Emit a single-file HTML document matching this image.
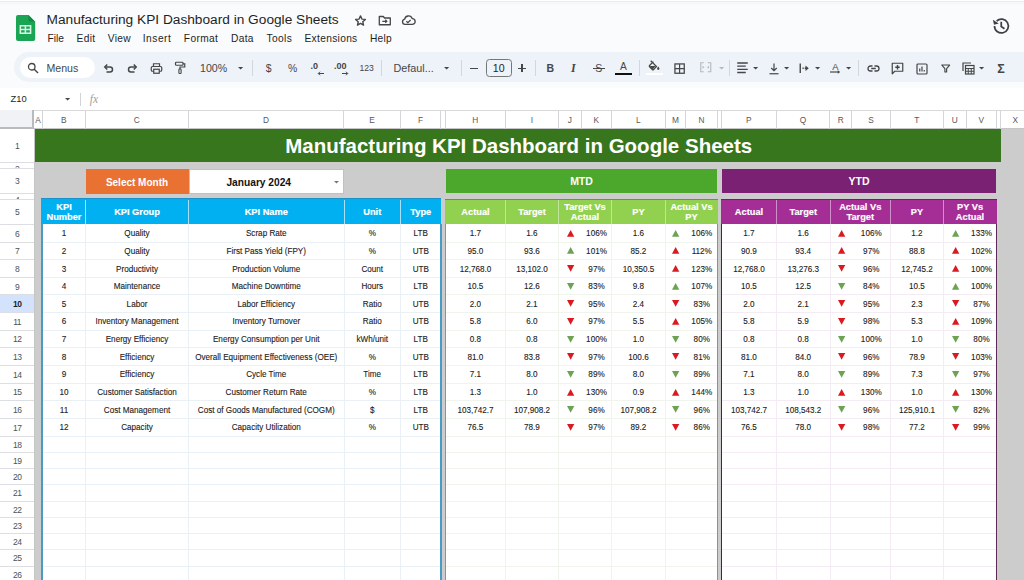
<!DOCTYPE html>
<html lang="en"><head><meta charset="utf-8"><title>Manufacturing KPI Dashboard in Google Sheets</title>
<style>
html,body{margin:0;padding:0;}
body{width:1024px;height:580px;overflow:hidden;background:#fff;position:relative;font-family:"Liberation Sans",Arial,sans-serif;color:#1f1f1f;}
div{position:absolute;box-sizing:border-box;white-space:nowrap;}
.c{display:flex;align-items:center;justify-content:center;text-align:center;}
.t{line-height:1;}
svg{position:absolute;overflow:visible;}
.rh{font-size:8.5px;color:#4d5156;letter-spacing:-0.45px;padding-left:0.8px;}
.ch{font-size:8.3px;color:#55585c;padding-left:0.6px;}
.d{font-size:8.14px;color:#1a1a1a;padding-top:1.1px;-webkit-text-stroke:0.1px #1a1a1a;}
.hd{font-size:9.25px;font-weight:700;color:#fff;line-height:1.1;white-space:normal;padding-top:1.0px;-webkit-text-stroke:0.18px #fff;}
.mn{font-size:10.2px;color:#1f1f1f;}
.tb{font-size:10.2px;color:#444746;}
</style></head>
<body>
<div class="" style="left:0.00px;top:0.00px;width:1024.00px;height:110.00px;background:#f9fbfd;"></div>
<div class="" style="left:0.00px;top:0.00px;width:1024.00px;height:1.20px;background:#fff;"></div>
<div class="" style="left:0.00px;top:1.20px;width:1024.00px;height:1.30px;background:#e8eae5;"></div>
<div class="" style="left:0.00px;top:2.50px;width:1024.00px;height:1.10px;background:#f3f5f4;"></div>
<div class="" style="left:14.00px;top:52.40px;width:1026.00px;height:29.80px;background:#eef2f9;border-radius:15px;"></div>
<div class="" style="left:19.50px;top:56.50px;width:75.50px;height:21.50px;background:#fff;border-radius:11px;"></div>
<div class="" style="left:0.00px;top:87.50px;width:1024.00px;height:22.50px;background:#fff;"></div>
<div class="t" style="left:46.50px;top:11.40px;width:353.50px;height:18.00px;font-size:13.7px;color:#1f1f1f;line-height:18px;">Manufacturing KPI Dashboard in Google Sheets</div>
<div class="mn" style="left:47.50px;top:31.60px;width:80.00px;height:13.00px;line-height:13px;letter-spacing:0.0px;">File</div>
<div class="mn" style="left:76.60px;top:31.60px;width:80.00px;height:13.00px;line-height:13px;letter-spacing:0.29px;">Edit</div>
<div class="mn" style="left:107.80px;top:31.60px;width:80.00px;height:13.00px;line-height:13px;letter-spacing:0.27px;">View</div>
<div class="mn" style="left:142.70px;top:31.60px;width:80.00px;height:13.00px;line-height:13px;letter-spacing:0.54px;">Insert</div>
<div class="mn" style="left:183.80px;top:31.60px;width:80.00px;height:13.00px;line-height:13px;letter-spacing:0.37px;">Format</div>
<div class="mn" style="left:231.10px;top:31.60px;width:80.00px;height:13.00px;line-height:13px;letter-spacing:0.27px;">Data</div>
<div class="mn" style="left:266.50px;top:31.60px;width:80.00px;height:13.00px;line-height:13px;letter-spacing:0.39px;">Tools</div>
<div class="mn" style="left:304.50px;top:31.60px;width:80.00px;height:13.00px;line-height:13px;letter-spacing:0.32px;">Extensions</div>
<div class="mn" style="left:370.00px;top:31.60px;width:80.00px;height:13.00px;line-height:13px;letter-spacing:0.25px;">Help</div>
<svg style="left:16.1px;top:14.5px" width="19.2" height="25.9" viewBox="0 0 20 27">
<path d="M2 0h11l7 7v18a2 2 0 0 1-2 2H2a2 2 0 0 1-2-2V2a2 2 0 0 1 2-2z" fill="#1aa554"/>
<path d="M13 0l7 7h-5a2 2 0 0 1-2-2z" fill="#128c45"/>
<path d="M3.7 10.4h12.3v9.4H3.7z M5.3 12v2.3h3.7V12z M10.6 12v2.3h3.8V12z M5.3 15.9v2.3h3.7v-2.3z M10.6 15.9v2.3h3.8v-2.3z" fill="#d9f5e4" fill-rule="evenodd"/>
</svg>
<svg style="left:353.9px;top:13.6px" width="13" height="13" viewBox="0 0 24 24"><path d="M12 3.5l2.6 5.9 6.4.6-4.8 4.3 1.4 6.3L12 17.3l-5.6 3.3 1.4-6.3L3 10l6.4-.6z" fill="none" stroke="#444746" stroke-width="2.5" stroke-linejoin="round"/></svg>
<svg style="left:377.6px;top:14.6px" width="13.6" height="11" viewBox="0 0 27 22"><path d="M2.500 3h8l2.500 3h11.500V19.500H2.500z" fill="none" stroke="#444746" stroke-width="2.600" stroke-linejoin="round"/><path d="M8.500 12.700h9M14.500 9.500l3.200 3.200-3.200 3.200" fill="none" stroke="#444746" stroke-width="2.200"/></svg>
<svg style="left:401px;top:14.4px" width="15" height="12" viewBox="0 0 28 22.4"><path d="M7.5 19.500a5 5 0 0 1-.6-9.9A7.2 7.2 0 0 1 20.8 8.500 5.500 5.500 0 0 1 21 19.500z" fill="none" stroke="#444746" stroke-width="2.500" stroke-linejoin="round"/><path d="M10 13.500l2.800 2.800 5.200-5.200" fill="none" stroke="#444746" stroke-width="2.300"/></svg>
<svg style="left:991.1px;top:15.6px" width="20" height="20" viewBox="0 0 24 24"><path d="M4.2 12a8.3 8.3 0 1 0 2.6-6" fill="none" stroke="#3f4245" stroke-width="2.1"/><path d="M2.3 4.600l1.300 5.800 5.700-1.500z" fill="#3f4245"/><path d="M12.300 7v5.700l3.900 2.700" fill="none" stroke="#3f4245" stroke-width="2.1"/></svg>
<div style="left:0;top:0.7px;width:1024px;height:0">
<svg style="left:27px;top:61.5px" width="12" height="12" viewBox="0 0 24 24"><circle cx="9.5" cy="9.5" r="6.5" fill="none" stroke="#444746" stroke-width="2.6"/><path d="M14.5 14.5L22 22" stroke="#444746" stroke-width="2.8"/></svg>
<div class="tb" style="left:46.50px;top:60.00px;width:60.00px;height:15.00px;line-height:15px;font-size:10.6px;">Menus</div>
<svg style="left:102.5px;top:62px" width="11" height="11" viewBox="0 0 22 22"><path d="M4 8h10a5 5 0 0 1 0 10H7" fill="none" stroke="#444746" stroke-width="2.9"/><path d="M8.5 3L3.5 8l5 5" fill="none" stroke="#444746" stroke-width="2.9"/></svg>
<svg style="left:126.5px;top:62px" width="11" height="11" viewBox="0 0 22 22"><path d="M18 8H8a5 5 0 0 0 0 10h7" fill="none" stroke="#444746" stroke-width="2.9"/><path d="M13.500 3l5 5-5 5" fill="none" stroke="#444746" stroke-width="2.9"/></svg>
<svg style="left:149.5px;top:61px" width="13" height="13" viewBox="0 0 26 26"><path d="M7 9V3.500h12V9" fill="none" stroke="#444746" stroke-width="2.4"/><rect x="2.500" y="9" width="21" height="9.500" rx="2.500" fill="none" stroke="#444746" stroke-width="2.4"/><rect x="7.500" y="14.500" width="11" height="8" fill="#edf2fa" stroke="#444746" stroke-width="2.4"/></svg>
<svg style="left:173.5px;top:60.5px" width="12" height="14" viewBox="0 0 24 28"><rect x="3" y="2.500" width="15" height="6" rx="1.500" fill="none" stroke="#444746" stroke-width="2.4"/><path d="M18 5.500h3.500v6.500H12v4" fill="none" stroke="#444746" stroke-width="2.4"/><rect x="9.800" y="16" width="4.400" height="9" rx="1.500" fill="none" stroke="#444746" stroke-width="2.2"/></svg>
<div class="tb" style="left:200.00px;top:60.00px;width:60.00px;height:15.00px;line-height:15px;font-size:10.6px;">100%</div>
<svg style="left:238.40px;top:66.20px" width="5.2" height="2.60" viewBox="0 0 10 5"><path d="M0 0h10L5 5z" fill="#444746"/></svg>
<div class="" style="left:252.10px;top:59.50px;width:0.80px;height:16.00px;background:#d3d6db;"></div>
<div class="tb" style="left:265.80px;top:60.00px;width:60.00px;height:15.00px;line-height:15px;font-weight:400;font-size:10.4px;">$</div>
<div class="tb" style="left:288.00px;top:60.00px;width:60.00px;height:15.00px;line-height:15px;font-weight:400;font-size:10.4px;">%</div>
<div class="tb" style="left:310.50px;top:60.00px;width:60.00px;height:15.00px;line-height:15px;font-weight:700;font-size:9px;top:58px;">.0</div>
<svg style="left:316.5px;top:70px" width="7" height="5" viewBox="0 0 14 10"><path d="M14 5H3M6 1.500L2.500 5 6 8.500" fill="none" stroke="#444746" stroke-width="2"/></svg>
<div class="tb" style="left:334.00px;top:60.00px;width:60.00px;height:15.00px;line-height:15px;font-weight:700;font-size:9px;top:58px;">.00</div>
<svg style="left:341.500px;top:70px" width="7" height="5" viewBox="0 0 14 10"><path d="M0 5h11M8 1.500L11.500 5 8 8.500" fill="none" stroke="#444746" stroke-width="2"/></svg>
<div class="tb" style="left:359.50px;top:60.00px;width:60.00px;height:15.00px;line-height:15px;font-size:8.6px;font-weight:400;">123</div>
<div class="" style="left:381.10px;top:59.50px;width:0.80px;height:16.00px;background:#d3d6db;"></div>
<div class="tb" style="left:393.50px;top:60.00px;width:60.00px;height:15.00px;line-height:15px;font-size:10.8px;">Defaul...</div>
<svg style="left:444.40px;top:66.20px" width="5.2" height="2.60" viewBox="0 0 10 5"><path d="M0 0h10L5 5z" fill="#444746"/></svg>
<div class="" style="left:461.10px;top:59.50px;width:0.80px;height:16.00px;background:#d3d6db;"></div>
<div class="" style="left:470.00px;top:67.00px;width:7.50px;height:1.20px;background:#444746;"></div>
<div class="c" style="left:486.00px;top:58.00px;width:25.50px;height:18.50px;border:1px solid #747775;border-radius:3.500px;font-size:10.6px;color:#1f1f1f;">10</div>
<div class="" style="left:518.20px;top:67.10px;width:7.60px;height:1.10px;background:#444746;"></div>
<div class="" style="left:521.45px;top:63.80px;width:1.10px;height:7.70px;background:#444746;"></div>
<div class="" style="left:535.35px;top:59.50px;width:0.80px;height:16.00px;background:#d3d6db;"></div>
<div class="tb" style="left:546.50px;top:60.00px;width:60.00px;height:15.00px;line-height:15px;font-weight:700;font-size:10.5px;color:#444746;">B</div>
<div class="tb" style="left:571.00px;top:60.00px;width:60.00px;height:15.00px;line-height:15px;font-weight:700;font-style:italic;font-size:10.5px;font-family:'Liberation Serif',serif;font-size:12px;">I</div>
<div class="tb" style="left:595.30px;top:60.00px;width:60.00px;height:15.00px;line-height:15px;font-size:10.5px;">S</div>
<div class="" style="left:593.00px;top:67.20px;width:12.00px;height:1.10px;background:#444746;"></div>
<div class="tb" style="left:620.00px;top:60.00px;width:60.00px;height:15.00px;line-height:15px;font-size:10.2px;top:58.5px;">A</div>
<div class="" style="left:615.00px;top:72.00px;width:17.00px;height:2.50px;background:#111;"></div>
<div class="" style="left:639.10px;top:59.50px;width:0.80px;height:16.00px;background:#d3d6db;"></div>
<svg style="left:648px;top:58.5px" width="12.5" height="12.5" viewBox="0 0 28 28"><path d="M6 4l13 13-6.500 6.500a2 2 0 0 1-2.800 0L3.500 17.300a2 2 0 0 1 0-2.800L12 6" fill="none" stroke="#444746" stroke-width="2.800"/><path d="M4 15.500h13.500l-6.300 6.800a1.500 1.500 0 0 1-2 0z" fill="#444746"/><path d="M23 17c1.700 2.400 2.600 3.800 2.600 5a2.600 2.600 0 0 1-5.200 0c0-1.200.9-2.600 2.600-5z" fill="#444746"/></svg>
<div class="" style="left:646.20px;top:72.00px;width:16.80px;height:2.20px;background:#fff;"></div>
<svg style="left:674.2px;top:62.3px" width="11.2" height="11.2" viewBox="0 0 24 24"><rect x="2" y="2" width="20" height="20" fill="none" stroke="#444746" stroke-width="2.700"/><path d="M12 2v20M2 12h20" stroke="#444746" stroke-width="2.500"/></svg>
<svg style="left:699.8px;top:61.8px" width="11.5" height="10.5" viewBox="0 0 23 21"><path d="M7.500 1.500H1.500v18h6M15.500 1.500h6v18h-6" fill="none" stroke="#b7babf" stroke-width="2.300"/><path d="M5 7.500l4 3-4 3zM18 7.500l-4 3 4 3z" fill="#b7babf"/></svg>
<svg style="left:718.90px;top:66.20px" width="5.2" height="2.60" viewBox="0 0 10 5"><path d="M0 0h10L5 5z" fill="#b4b7bb"/></svg>
<div class="" style="left:728.60px;top:59.50px;width:0.80px;height:16.00px;background:#d3d6db;"></div>
<svg style="left:737px;top:61.4px" width="11" height="11.5" viewBox="0 0 22 23"><path d="M0.500 2h21M0.500 8.300h17M0.500 14.600h21M0.500 20.900h17" stroke="#444746" stroke-width="2.700"/></svg>
<svg style="left:753.15px;top:66.20px" width="5.2" height="2.60" viewBox="0 0 10 5"><path d="M0 0h10L5 5z" fill="#444746"/></svg>
<svg style="left:768.500px;top:62px" width="10" height="12" viewBox="0 0 20 24"><path d="M10 1v14M4.500 10l5.500 5.500 5.500-5.500" fill="none" stroke="#444746" stroke-width="2.400"/><path d="M1 21.500h18" stroke="#444746" stroke-width="2.400"/></svg>
<svg style="left:784.15px;top:66.20px" width="5.2" height="2.60" viewBox="0 0 10 5"><path d="M0 0h10L5 5z" fill="#444746"/></svg>
<svg style="left:799px;top:62.3px" width="10" height="10.5" viewBox="0 0 20 21"><path d="M2.500 1v19" stroke="#444746" stroke-width="2.800"/><path d="M7 10.500h2.500M11.500 10.500h4" fill="none" stroke="#444746" stroke-width="2.600"/><path d="M13 5l6.500 5.500L13 16z" fill="#444746"/></svg>
<svg style="left:815.40px;top:66.20px" width="5.2" height="2.60" viewBox="0 0 10 5"><path d="M0 0h10L5 5z" fill="#444746"/></svg>
<div class="tb" style="left:832.20px;top:60.00px;width:60.00px;height:15.00px;line-height:15px;font-size:9.4px;top:58.3px;">A</div>
<svg style="left:830.2px;top:69.4px" width="11" height="4" viewBox="0 0 22 8"><path d="M0 4h18" fill="none" stroke="#444746" stroke-width="2.400"/><path d="M15.500 0.500l5 3.500-5 3.500z" fill="#444746"/></svg>
<svg style="left:846.40px;top:66.20px" width="5.2" height="2.60" viewBox="0 0 10 5"><path d="M0 0h10L5 5z" fill="#444746"/></svg>
<div class="" style="left:858.10px;top:59.50px;width:0.80px;height:16.00px;background:#d3d6db;"></div>
<svg style="left:866.500px;top:64px" width="13" height="7" viewBox="0 0 26 14"><path d="M11 2H7a5 5 0 0 0 0 10h4M15 2h4a5 5 0 0 1 0 10h-4M8.500 7h9" fill="none" stroke="#444746" stroke-width="2.600"/></svg>
<svg style="left:890.500px;top:61px" width="13" height="13" viewBox="0 0 26 26"><path d="M2.500 2.500h21v16h-16l-5 5z" fill="none" stroke="#444746" stroke-width="2.400" stroke-linejoin="round"/><path d="M13 6v9M8.500 10.500h9" stroke="#444746" stroke-width="2.900"/></svg>
<svg style="left:915.7px;top:62.1px" width="12" height="12" viewBox="0 0 24 24"><rect x="2" y="2" width="20" height="20" rx="2" fill="none" stroke="#444746" stroke-width="2.400"/><path d="M7.500 17v-6M12 17V7M16.500 17v-3" stroke="#444746" stroke-width="2.400"/></svg>
<svg style="left:940.5px;top:63.2px" width="9.5" height="9" viewBox="0 0 22 20"><path d="M2 2h18l-7 8.500v7.500h-4v-7.500z" fill="none" stroke="#444746" stroke-width="2.600" stroke-linejoin="round"/></svg>
<svg style="left:961.500px;top:61px" width="13" height="13" viewBox="0 0 26 26"><path d="M2 18V2h16" fill="none" stroke="#444746" stroke-width="2.400"/><rect x="7" y="7" width="17" height="17" fill="none" stroke="#444746" stroke-width="2.400"/><path d="M7 13h17M12.500 13v11M18.500 13v11M7 18.500h17" stroke="#444746" stroke-width="2"/></svg>
<svg style="left:979.15px;top:66.20px" width="5.2" height="2.60" viewBox="0 0 10 5"><path d="M0 0h10L5 5z" fill="#444746"/></svg>
<div class="tb" style="left:997.30px;top:60.00px;width:60.00px;height:15.00px;line-height:15px;font-weight:700;font-size:12.5px;color:#444746;top:61px;">Σ</div>
</div>
<div class="" style="left:10.50px;top:92.00px;width:49.50px;height:14.00px;font-size:9.4px;line-height:14px;color:#1f1f1f;">Z10</div>
<svg style="left:64.90px;top:98.20px" width="5.2" height="2.60" viewBox="0 0 10 5"><path d="M0 0h10L5 5z" fill="#444746"/></svg>
<div class="" style="left:80.40px;top:92.50px;width:0.80px;height:13.00px;background:#d0d3d8;"></div>
<div class="" style="left:89.80px;top:91.50px;width:20.20px;height:14.50px;font-size:11.500px;line-height:14px;color:#9aa0a6;font-style:italic;font-family:'Liberation Serif',serif;">fx</div>
<div class="" style="left:0.00px;top:110.00px;width:1024.00px;height:470.00px;background:#fff;"></div>
<div class="" style="left:0.00px;top:110.00px;width:1024.00px;height:18.50px;background:#fff;border-top:1px solid #d9d9d9;border-bottom:1px solid #c4c7c5;"></div>
<div class="" style="left:0.00px;top:110.00px;width:34.00px;height:18.50px;background:#f0f2f5;border-right:2.500px solid #b8babd;border-bottom:2.500px solid #b8babd;"></div>
<div class="c ch" style="left:34.00px;top:111.00px;width:8.50px;height:17.50px;border-right:1px solid #d3d5d8;">A</div>
<div class="c ch" style="left:42.50px;top:111.00px;width:43.00px;height:17.50px;border-right:1px solid #d3d5d8;">B</div>
<div class="c ch" style="left:85.50px;top:111.00px;width:103.00px;height:17.50px;border-right:1px solid #d3d5d8;">C</div>
<div class="c ch" style="left:188.50px;top:111.00px;width:155.50px;height:17.50px;border-right:1px solid #d3d5d8;">D</div>
<div class="c ch" style="left:344.00px;top:111.00px;width:56.50px;height:17.50px;border-right:1px solid #d3d5d8;">E</div>
<div class="c ch" style="left:400.50px;top:111.00px;width:40.50px;height:17.50px;border-right:1px solid #d3d5d8;">F</div>
<div class="c ch" style="left:441.00px;top:111.00px;width:4.50px;height:17.50px;border-right:1px solid #d3d5d8;"></div>
<div class="c ch" style="left:445.50px;top:111.00px;width:60.00px;height:17.50px;border-right:1px solid #d3d5d8;">H</div>
<div class="c ch" style="left:505.50px;top:111.00px;width:53.00px;height:17.50px;border-right:1px solid #d3d5d8;">I</div>
<div class="c ch" style="left:558.50px;top:111.00px;width:23.00px;height:17.50px;border-right:1px solid #d3d5d8;">J</div>
<div class="c ch" style="left:581.50px;top:111.00px;width:30.00px;height:17.50px;border-right:1px solid #d3d5d8;">K</div>
<div class="c ch" style="left:611.50px;top:111.00px;width:54.00px;height:17.50px;border-right:1px solid #d3d5d8;">L</div>
<div class="c ch" style="left:665.50px;top:111.00px;width:20.50px;height:17.50px;border-right:1px solid #d3d5d8;">M</div>
<div class="c ch" style="left:686.00px;top:111.00px;width:31.50px;height:17.50px;border-right:1px solid #d3d5d8;">N</div>
<div class="c ch" style="left:717.50px;top:111.00px;width:4.00px;height:17.50px;border-right:1px solid #d3d5d8;"></div>
<div class="c ch" style="left:721.50px;top:111.00px;width:55.00px;height:17.50px;border-right:1px solid #d3d5d8;">P</div>
<div class="c ch" style="left:776.50px;top:111.00px;width:53.50px;height:17.50px;border-right:1px solid #d3d5d8;">Q</div>
<div class="c ch" style="left:830.00px;top:111.00px;width:22.00px;height:17.50px;border-right:1px solid #d3d5d8;">R</div>
<div class="c ch" style="left:852.00px;top:111.00px;width:38.50px;height:17.50px;border-right:1px solid #d3d5d8;">S</div>
<div class="c ch" style="left:890.50px;top:111.00px;width:53.00px;height:17.50px;border-right:1px solid #d3d5d8;">T</div>
<div class="c ch" style="left:943.50px;top:111.00px;width:23.00px;height:17.50px;border-right:1px solid #d3d5d8;">U</div>
<div class="c ch" style="left:966.50px;top:111.00px;width:30.00px;height:17.50px;border-right:1px solid #d3d5d8;">V</div>
<div class="c ch" style="left:996.50px;top:111.00px;width:4.50px;height:17.50px;border-right:1px solid #d3d5d8;"></div>
<div class="c ch" style="left:1001.00px;top:111.00px;width:29.00px;height:17.50px;border-right:1px solid #d3d5d8;">X</div>
<div class="" style="left:0.00px;top:128.50px;width:34.60px;height:451.50px;background:#fff;border-right:1px solid #c4c7c5;"></div>
<div class="c rh" style="left:0.00px;top:129.00px;width:33.60px;height:34.00px;border-bottom:1px solid #dcdee1;">1</div>
<div class="" style="left:0.00px;top:162.50px;width:33.60px;height:6.20px;border-bottom:1px solid #dcdee1;overflow:hidden;"><div class="rh" style="left:0;width:33.6px;top:1.30px;height:10px;line-height:10px;text-align:center;">2</div></div>
<div class="c rh" style="left:0.00px;top:168.20px;width:33.60px;height:26.10px;border-bottom:1px solid #dcdee1;">3</div>
<div class="" style="left:0.00px;top:193.80px;width:33.60px;height:5.90px;border-bottom:1px solid #dcdee1;overflow:hidden;"><div class="rh" style="left:0;width:33.6px;top:1.00px;height:10px;line-height:10px;text-align:center;">4</div></div>
<div class="c rh" style="left:0.00px;top:199.20px;width:33.60px;height:25.70px;border-bottom:1px solid #dcdee1;">5</div>
<div class="c rh" style="left:0.00px;top:224.40px;width:33.60px;height:18.14px;border-bottom:1px solid #dcdee1;padding-top:1.4px;">6</div>
<div class="c rh" style="left:0.00px;top:242.04px;width:33.60px;height:18.14px;border-bottom:1px solid #dcdee1;padding-top:1.4px;">7</div>
<div class="c rh" style="left:0.00px;top:259.68px;width:33.60px;height:18.14px;border-bottom:1px solid #dcdee1;padding-top:1.4px;">8</div>
<div class="c rh" style="left:0.00px;top:277.32px;width:33.60px;height:18.14px;border-bottom:1px solid #dcdee1;padding-top:1.4px;">9</div>
<div class="c rh" style="left:0.00px;top:294.96px;width:33.60px;height:18.14px;border-bottom:1px solid #dcdee1;padding-top:1.4px;background:#d3e3fd;font-weight:700;color:#1f1f1f;">10</div>
<div class="c rh" style="left:0.00px;top:312.60px;width:33.60px;height:18.14px;border-bottom:1px solid #dcdee1;padding-top:1.4px;">11</div>
<div class="c rh" style="left:0.00px;top:330.24px;width:33.60px;height:18.14px;border-bottom:1px solid #dcdee1;padding-top:1.4px;">12</div>
<div class="c rh" style="left:0.00px;top:347.88px;width:33.60px;height:18.14px;border-bottom:1px solid #dcdee1;padding-top:1.4px;">13</div>
<div class="c rh" style="left:0.00px;top:365.52px;width:33.60px;height:18.14px;border-bottom:1px solid #dcdee1;padding-top:1.4px;">14</div>
<div class="c rh" style="left:0.00px;top:383.16px;width:33.60px;height:18.14px;border-bottom:1px solid #dcdee1;padding-top:1.4px;">15</div>
<div class="c rh" style="left:0.00px;top:400.80px;width:33.60px;height:18.14px;border-bottom:1px solid #dcdee1;padding-top:1.4px;">16</div>
<div class="c rh" style="left:0.00px;top:418.44px;width:33.60px;height:18.14px;border-bottom:1px solid #dcdee1;padding-top:1.4px;">17</div>
<div class="c rh" style="left:0.00px;top:436.10px;width:33.60px;height:16.75px;border-bottom:1px solid #dcdee1;padding-top:1.4px;">18</div>
<div class="c rh" style="left:0.00px;top:452.35px;width:33.60px;height:16.75px;border-bottom:1px solid #dcdee1;padding-top:1.4px;">19</div>
<div class="c rh" style="left:0.00px;top:468.60px;width:33.60px;height:16.75px;border-bottom:1px solid #dcdee1;padding-top:1.4px;">20</div>
<div class="c rh" style="left:0.00px;top:484.85px;width:33.60px;height:16.75px;border-bottom:1px solid #dcdee1;padding-top:1.4px;">21</div>
<div class="c rh" style="left:0.00px;top:501.10px;width:33.60px;height:16.75px;border-bottom:1px solid #dcdee1;padding-top:1.4px;">22</div>
<div class="c rh" style="left:0.00px;top:517.35px;width:33.60px;height:16.75px;border-bottom:1px solid #dcdee1;padding-top:1.4px;">23</div>
<div class="c rh" style="left:0.00px;top:533.60px;width:33.60px;height:16.75px;border-bottom:1px solid #dcdee1;padding-top:1.4px;">24</div>
<div class="c rh" style="left:0.00px;top:549.85px;width:33.60px;height:16.75px;border-bottom:1px solid #dcdee1;padding-top:1.4px;">25</div>
<div class="c rh" style="left:0.00px;top:566.10px;width:33.60px;height:16.75px;border-bottom:1px solid #dcdee1;padding-top:1.4px;">26</div>
<div class="" style="left:34.60px;top:128.80px;width:989.40px;height:451.20px;background:#cccccc;"></div>
<div class="c" style="left:34.60px;top:129.00px;width:966.20px;height:33.20px;background:#38761d;padding-top:0.8px;color:#fff;font-weight:700;font-size:20.500px;padding-left:2px;">Manufacturing KPI Dashboard in Google Sheets</div>
<div class="c" style="left:85.50px;top:169.00px;width:103.00px;height:25.00px;background:#e97132;color:#fff;font-weight:700;font-size:10px;padding-top:1.2px;">Select Month</div>
<div class="" style="left:188.50px;top:168.50px;width:155.80px;height:25.50px;background:#fff;border:1px solid #eeb394;"></div>
<div class="c" style="left:188.50px;top:169.40px;width:140.50px;height:25.50px;font-weight:700;font-size:10.200px;color:#111;">January 2024</div>
<svg style="left:333.50px;top:180.50px" width="5" height="2.50" viewBox="0 0 10 5"><path d="M0 0h10L5 5z" fill="#777"/></svg>
<div class="c" style="left:446.00px;top:169.20px;width:271.00px;height:23.80px;background:#4ca82c;color:#fff;font-weight:700;font-size:10.500px;">MTD</div>
<div class="c" style="left:722.20px;top:169.20px;width:273.80px;height:23.80px;background:#7a2174;color:#fff;font-weight:700;font-size:10.500px;">YTD</div>
<div class="" style="left:41.20px;top:197.80px;width:400.30px;height:392.20px;background:#fff;"></div>
<div class="" style="left:42.90px;top:241.54px;width:397.10px;height:1.00px;background:#eaf1f6;"></div>
<div class="" style="left:42.90px;top:259.18px;width:397.10px;height:1.00px;background:#eaf1f6;"></div>
<div class="" style="left:42.90px;top:276.82px;width:397.10px;height:1.00px;background:#eaf1f6;"></div>
<div class="" style="left:42.90px;top:294.46px;width:397.10px;height:1.00px;background:#eaf1f6;"></div>
<div class="" style="left:42.90px;top:312.10px;width:397.10px;height:1.00px;background:#eaf1f6;"></div>
<div class="" style="left:42.90px;top:329.74px;width:397.10px;height:1.00px;background:#eaf1f6;"></div>
<div class="" style="left:42.90px;top:347.38px;width:397.10px;height:1.00px;background:#eaf1f6;"></div>
<div class="" style="left:42.90px;top:365.02px;width:397.10px;height:1.00px;background:#eaf1f6;"></div>
<div class="" style="left:42.90px;top:382.66px;width:397.10px;height:1.00px;background:#eaf1f6;"></div>
<div class="" style="left:42.90px;top:400.30px;width:397.10px;height:1.00px;background:#eaf1f6;"></div>
<div class="" style="left:42.90px;top:417.94px;width:397.10px;height:1.00px;background:#eaf1f6;"></div>
<div class="" style="left:42.90px;top:435.58px;width:397.10px;height:1.00px;background:#eaf1f6;"></div>
<div class="" style="left:42.90px;top:451.85px;width:397.10px;height:1.00px;background:#eaf1f6;"></div>
<div class="" style="left:42.90px;top:468.10px;width:397.10px;height:1.00px;background:#eaf1f6;"></div>
<div class="" style="left:42.90px;top:484.35px;width:397.10px;height:1.00px;background:#eaf1f6;"></div>
<div class="" style="left:42.90px;top:500.60px;width:397.10px;height:1.00px;background:#eaf1f6;"></div>
<div class="" style="left:42.90px;top:516.85px;width:397.10px;height:1.00px;background:#eaf1f6;"></div>
<div class="" style="left:42.90px;top:533.10px;width:397.10px;height:1.00px;background:#eaf1f6;"></div>
<div class="" style="left:42.90px;top:549.35px;width:397.10px;height:1.00px;background:#eaf1f6;"></div>
<div class="" style="left:42.90px;top:565.60px;width:397.10px;height:1.00px;background:#eaf1f6;"></div>
<div class="" style="left:42.90px;top:581.85px;width:397.10px;height:1.00px;background:#eaf1f6;"></div>
<div class="" style="left:42.90px;top:598.10px;width:397.10px;height:1.00px;background:#eaf1f6;"></div>
<div class="" style="left:85.00px;top:224.40px;width:1.00px;height:365.60px;background:#eaf1f6;"></div>
<div class="" style="left:188.00px;top:224.40px;width:1.00px;height:365.60px;background:#eaf1f6;"></div>
<div class="" style="left:343.50px;top:224.40px;width:1.00px;height:365.60px;background:#eaf1f6;"></div>
<div class="" style="left:400.00px;top:224.40px;width:1.00px;height:365.60px;background:#eaf1f6;"></div>
<div class="" style="left:41.20px;top:197.80px;width:400.30px;height:26.60px;background:#00b0f0;"></div>
<div class="c hd" style="left:42.50px;top:199.50px;width:43.00px;height:24.90px;padding-left:1px;padding-right:1px;">KPI Number</div>
<div class="" style="left:85.00px;top:200.00px;width:1.00px;height:24.40px;background:#a8e2fa;"></div>
<div class="c hd" style="left:85.50px;top:199.50px;width:103.00px;height:24.90px;padding-left:1px;padding-right:1px;">KPI Group</div>
<div class="" style="left:188.00px;top:200.00px;width:1.00px;height:24.40px;background:#a8e2fa;"></div>
<div class="c hd" style="left:188.50px;top:199.50px;width:155.50px;height:24.90px;padding-left:1px;padding-right:1px;">KPI Name</div>
<div class="" style="left:343.50px;top:200.00px;width:1.00px;height:24.40px;background:#a8e2fa;"></div>
<div class="c hd" style="left:344.00px;top:199.50px;width:56.50px;height:24.90px;padding-left:1px;padding-right:1px;">Unit</div>
<div class="" style="left:400.00px;top:200.00px;width:1.00px;height:24.40px;background:#a8e2fa;"></div>
<div class="c hd" style="left:400.50px;top:199.50px;width:40.50px;height:24.90px;padding-left:1px;padding-right:1px;">Type</div>
<div class="c d" style="left:42.50px;top:224.40px;width:43.00px;height:17.64px;">1</div>
<div class="c d" style="left:85.50px;top:224.40px;width:103.00px;height:17.64px;">Quality</div>
<div class="c d" style="left:188.50px;top:224.40px;width:155.50px;height:17.64px;">Scrap Rate</div>
<div class="c d" style="left:344.00px;top:224.40px;width:56.50px;height:17.64px;">%</div>
<div class="c d" style="left:400.50px;top:224.40px;width:40.50px;height:17.64px;">LTB</div>
<div class="c d" style="left:42.50px;top:242.04px;width:43.00px;height:17.64px;">2</div>
<div class="c d" style="left:85.50px;top:242.04px;width:103.00px;height:17.64px;">Quality</div>
<div class="c d" style="left:188.50px;top:242.04px;width:155.50px;height:17.64px;">First Pass Yield (FPY)</div>
<div class="c d" style="left:344.00px;top:242.04px;width:56.50px;height:17.64px;">%</div>
<div class="c d" style="left:400.50px;top:242.04px;width:40.50px;height:17.64px;">UTB</div>
<div class="c d" style="left:42.50px;top:259.68px;width:43.00px;height:17.64px;">3</div>
<div class="c d" style="left:85.50px;top:259.68px;width:103.00px;height:17.64px;">Productivity</div>
<div class="c d" style="left:188.50px;top:259.68px;width:155.50px;height:17.64px;">Production Volume</div>
<div class="c d" style="left:344.00px;top:259.68px;width:56.50px;height:17.64px;">Count</div>
<div class="c d" style="left:400.50px;top:259.68px;width:40.50px;height:17.64px;">UTB</div>
<div class="c d" style="left:42.50px;top:277.32px;width:43.00px;height:17.64px;">4</div>
<div class="c d" style="left:85.50px;top:277.32px;width:103.00px;height:17.64px;">Maintenance</div>
<div class="c d" style="left:188.50px;top:277.32px;width:155.50px;height:17.64px;">Machine Downtime</div>
<div class="c d" style="left:344.00px;top:277.32px;width:56.50px;height:17.64px;">Hours</div>
<div class="c d" style="left:400.50px;top:277.32px;width:40.50px;height:17.64px;">LTB</div>
<div class="c d" style="left:42.50px;top:294.96px;width:43.00px;height:17.64px;">5</div>
<div class="c d" style="left:85.50px;top:294.96px;width:103.00px;height:17.64px;">Labor</div>
<div class="c d" style="left:188.50px;top:294.96px;width:155.50px;height:17.64px;">Labor Efficiency</div>
<div class="c d" style="left:344.00px;top:294.96px;width:56.50px;height:17.64px;">Ratio</div>
<div class="c d" style="left:400.50px;top:294.96px;width:40.50px;height:17.64px;">UTB</div>
<div class="c d" style="left:42.50px;top:312.60px;width:43.00px;height:17.64px;">6</div>
<div class="c d" style="left:85.50px;top:312.60px;width:103.00px;height:17.64px;">Inventory Management</div>
<div class="c d" style="left:188.50px;top:312.60px;width:155.50px;height:17.64px;">Inventory Turnover</div>
<div class="c d" style="left:344.00px;top:312.60px;width:56.50px;height:17.64px;">Ratio</div>
<div class="c d" style="left:400.50px;top:312.60px;width:40.50px;height:17.64px;">UTB</div>
<div class="c d" style="left:42.50px;top:330.24px;width:43.00px;height:17.64px;">7</div>
<div class="c d" style="left:85.50px;top:330.24px;width:103.00px;height:17.64px;">Energy Efficiency</div>
<div class="c d" style="left:188.50px;top:330.24px;width:155.50px;height:17.64px;">Energy Consumption per Unit</div>
<div class="c d" style="left:344.00px;top:330.24px;width:56.50px;height:17.64px;">kWh/unit</div>
<div class="c d" style="left:400.50px;top:330.24px;width:40.50px;height:17.64px;">LTB</div>
<div class="c d" style="left:42.50px;top:347.88px;width:43.00px;height:17.64px;">8</div>
<div class="c d" style="left:85.50px;top:347.88px;width:103.00px;height:17.64px;">Efficiency</div>
<div class="c d" style="left:188.50px;top:347.88px;width:155.50px;height:17.64px;">Overall Equipment Effectiveness (OEE)</div>
<div class="c d" style="left:344.00px;top:347.88px;width:56.50px;height:17.64px;">%</div>
<div class="c d" style="left:400.50px;top:347.88px;width:40.50px;height:17.64px;">UTB</div>
<div class="c d" style="left:42.50px;top:365.52px;width:43.00px;height:17.64px;">9</div>
<div class="c d" style="left:85.50px;top:365.52px;width:103.00px;height:17.64px;">Efficiency</div>
<div class="c d" style="left:188.50px;top:365.52px;width:155.50px;height:17.64px;">Cycle Time</div>
<div class="c d" style="left:344.00px;top:365.52px;width:56.50px;height:17.64px;">Time</div>
<div class="c d" style="left:400.50px;top:365.52px;width:40.50px;height:17.64px;">LTB</div>
<div class="c d" style="left:42.50px;top:383.16px;width:43.00px;height:17.64px;">10</div>
<div class="c d" style="left:85.50px;top:383.16px;width:103.00px;height:17.64px;">Customer Satisfaction</div>
<div class="c d" style="left:188.50px;top:383.16px;width:155.50px;height:17.64px;">Customer Return Rate</div>
<div class="c d" style="left:344.00px;top:383.16px;width:56.50px;height:17.64px;">%</div>
<div class="c d" style="left:400.50px;top:383.16px;width:40.50px;height:17.64px;">LTB</div>
<div class="c d" style="left:42.50px;top:400.80px;width:43.00px;height:17.64px;">11</div>
<div class="c d" style="left:85.50px;top:400.80px;width:103.00px;height:17.64px;">Cost Management</div>
<div class="c d" style="left:188.50px;top:400.80px;width:155.50px;height:17.64px;">Cost of Goods Manufactured (COGM)</div>
<div class="c d" style="left:344.00px;top:400.80px;width:56.50px;height:17.64px;">$</div>
<div class="c d" style="left:400.50px;top:400.80px;width:40.50px;height:17.64px;">LTB</div>
<div class="c d" style="left:42.50px;top:418.44px;width:43.00px;height:17.64px;">12</div>
<div class="c d" style="left:85.50px;top:418.44px;width:103.00px;height:17.64px;">Capacity</div>
<div class="c d" style="left:188.50px;top:418.44px;width:155.50px;height:17.64px;">Capacity Utilization</div>
<div class="c d" style="left:344.00px;top:418.44px;width:56.50px;height:17.64px;">%</div>
<div class="c d" style="left:400.50px;top:418.44px;width:40.50px;height:17.64px;">UTB</div>
<div class="" style="left:41.20px;top:224.40px;width:1.70px;height:365.60px;background:#4a9ac6;"></div>
<div class="" style="left:440.00px;top:224.40px;width:1.50px;height:365.60px;background:#4a9ac6;"></div>
<div class="" style="left:41.20px;top:197.80px;width:400.30px;height:1.50px;background:#1b93ca;"></div>
<div class="" style="left:444.80px;top:198.60px;width:273.20px;height:391.40px;background:#fff;"></div>
<div class="" style="left:446.00px;top:241.54px;width:270.60px;height:1.00px;background:#eff5ec;"></div>
<div class="" style="left:446.00px;top:259.18px;width:270.60px;height:1.00px;background:#eff5ec;"></div>
<div class="" style="left:446.00px;top:276.82px;width:270.60px;height:1.00px;background:#eff5ec;"></div>
<div class="" style="left:446.00px;top:294.46px;width:270.60px;height:1.00px;background:#eff5ec;"></div>
<div class="" style="left:446.00px;top:312.10px;width:270.60px;height:1.00px;background:#eff5ec;"></div>
<div class="" style="left:446.00px;top:329.74px;width:270.60px;height:1.00px;background:#eff5ec;"></div>
<div class="" style="left:446.00px;top:347.38px;width:270.60px;height:1.00px;background:#eff5ec;"></div>
<div class="" style="left:446.00px;top:365.02px;width:270.60px;height:1.00px;background:#eff5ec;"></div>
<div class="" style="left:446.00px;top:382.66px;width:270.60px;height:1.00px;background:#eff5ec;"></div>
<div class="" style="left:446.00px;top:400.30px;width:270.60px;height:1.00px;background:#eff5ec;"></div>
<div class="" style="left:446.00px;top:417.94px;width:270.60px;height:1.00px;background:#eff5ec;"></div>
<div class="" style="left:446.00px;top:435.58px;width:270.60px;height:1.00px;background:#eff5ec;"></div>
<div class="" style="left:446.00px;top:451.85px;width:270.60px;height:1.00px;background:#eff5ec;"></div>
<div class="" style="left:446.00px;top:468.10px;width:270.60px;height:1.00px;background:#eff5ec;"></div>
<div class="" style="left:446.00px;top:484.35px;width:270.60px;height:1.00px;background:#eff5ec;"></div>
<div class="" style="left:446.00px;top:500.60px;width:270.60px;height:1.00px;background:#eff5ec;"></div>
<div class="" style="left:446.00px;top:516.85px;width:270.60px;height:1.00px;background:#eff5ec;"></div>
<div class="" style="left:446.00px;top:533.10px;width:270.60px;height:1.00px;background:#eff5ec;"></div>
<div class="" style="left:446.00px;top:549.35px;width:270.60px;height:1.00px;background:#eff5ec;"></div>
<div class="" style="left:446.00px;top:565.60px;width:270.60px;height:1.00px;background:#eff5ec;"></div>
<div class="" style="left:446.00px;top:581.85px;width:270.60px;height:1.00px;background:#eff5ec;"></div>
<div class="" style="left:446.00px;top:598.10px;width:270.60px;height:1.00px;background:#eff5ec;"></div>
<div class="" style="left:505.00px;top:224.40px;width:1.00px;height:365.60px;background:#eff5ec;"></div>
<div class="" style="left:558.00px;top:224.40px;width:1.00px;height:365.60px;background:#eff5ec;"></div>
<div class="" style="left:611.00px;top:224.40px;width:1.00px;height:365.60px;background:#eff5ec;"></div>
<div class="" style="left:665.00px;top:224.40px;width:1.00px;height:365.60px;background:#eff5ec;"></div>
<div class="" style="left:444.80px;top:198.60px;width:273.20px;height:25.80px;background:#92d050;"></div>
<div class="c hd" style="left:445.50px;top:199.50px;width:60.00px;height:24.90px;padding-left:1px;padding-right:1px;">Actual</div>
<div class="" style="left:505.00px;top:200.00px;width:1.00px;height:24.40px;background:#bfe59a;"></div>
<div class="c hd" style="left:505.50px;top:199.50px;width:53.00px;height:24.90px;padding-left:1px;padding-right:1px;">Target</div>
<div class="" style="left:558.00px;top:200.00px;width:1.00px;height:24.40px;background:#bfe59a;"></div>
<div class="c hd" style="left:558.50px;top:199.50px;width:53.00px;height:24.90px;padding-left:1px;padding-right:1px;">Target Vs Actual</div>
<div class="" style="left:611.00px;top:200.00px;width:1.00px;height:24.40px;background:#bfe59a;"></div>
<div class="c hd" style="left:611.50px;top:199.50px;width:54.00px;height:24.90px;padding-left:1px;padding-right:1px;">PY</div>
<div class="" style="left:665.00px;top:200.00px;width:1.00px;height:24.40px;background:#bfe59a;"></div>
<div class="c hd" style="left:665.50px;top:199.50px;width:52.00px;height:24.90px;padding-left:1px;padding-right:1px;">Actual Vs PY</div>
<div class="c d" style="left:445.50px;top:224.40px;width:60.00px;height:17.64px;">1.7</div>
<div class="c d" style="left:505.50px;top:224.40px;width:53.00px;height:17.64px;">1.6</div>
<svg style="left:566.65px;top:229.77px" width="7.3" height="6.7"><polygon points="0,6.7 3.65,0 7.3,6.7" fill="#da1a20"/></svg>
<div class="c d" style="left:581.50px;top:224.40px;width:30.00px;height:17.64px;">106%</div>
<div class="c d" style="left:611.50px;top:224.40px;width:54.00px;height:17.64px;">1.6</div>
<svg style="left:672.40px;top:229.77px" width="7.3" height="6.7"><polygon points="0,6.7 3.65,0 7.3,6.7" fill="#6ba352"/></svg>
<div class="c d" style="left:686.00px;top:224.40px;width:31.50px;height:17.64px;">106%</div>
<div class="c d" style="left:445.50px;top:242.04px;width:60.00px;height:17.64px;">95.0</div>
<div class="c d" style="left:505.50px;top:242.04px;width:53.00px;height:17.64px;">93.6</div>
<svg style="left:566.65px;top:247.41px" width="7.3" height="6.7"><polygon points="0,6.7 3.65,0 7.3,6.7" fill="#6ba352"/></svg>
<div class="c d" style="left:581.50px;top:242.04px;width:30.00px;height:17.64px;">101%</div>
<div class="c d" style="left:611.50px;top:242.04px;width:54.00px;height:17.64px;">85.2</div>
<svg style="left:672.40px;top:247.41px" width="7.3" height="6.7"><polygon points="0,6.7 3.65,0 7.3,6.7" fill="#da1a20"/></svg>
<div class="c d" style="left:686.00px;top:242.04px;width:31.50px;height:17.64px;">112%</div>
<div class="c d" style="left:445.50px;top:259.68px;width:60.00px;height:17.64px;">12,768.0</div>
<div class="c d" style="left:505.50px;top:259.68px;width:53.00px;height:17.64px;">13,102.0</div>
<svg style="left:566.65px;top:265.05px" width="7.3" height="6.7"><polygon points="0,0 7.3,0 3.65,6.7" fill="#da1a20"/></svg>
<div class="c d" style="left:581.50px;top:259.68px;width:30.00px;height:17.64px;">97%</div>
<div class="c d" style="left:611.50px;top:259.68px;width:54.00px;height:17.64px;">10,350.5</div>
<svg style="left:672.40px;top:265.05px" width="7.3" height="6.7"><polygon points="0,6.7 3.65,0 7.3,6.7" fill="#da1a20"/></svg>
<div class="c d" style="left:686.00px;top:259.68px;width:31.50px;height:17.64px;">123%</div>
<div class="c d" style="left:445.50px;top:277.32px;width:60.00px;height:17.64px;">10.5</div>
<div class="c d" style="left:505.50px;top:277.32px;width:53.00px;height:17.64px;">12.6</div>
<svg style="left:566.65px;top:282.69px" width="7.3" height="6.7"><polygon points="0,0 7.3,0 3.65,6.7" fill="#6ba352"/></svg>
<div class="c d" style="left:581.50px;top:277.32px;width:30.00px;height:17.64px;">83%</div>
<div class="c d" style="left:611.50px;top:277.32px;width:54.00px;height:17.64px;">9.8</div>
<svg style="left:672.40px;top:282.69px" width="7.3" height="6.7"><polygon points="0,6.7 3.65,0 7.3,6.7" fill="#6ba352"/></svg>
<div class="c d" style="left:686.00px;top:277.32px;width:31.50px;height:17.64px;">107%</div>
<div class="c d" style="left:445.50px;top:294.96px;width:60.00px;height:17.64px;">2.0</div>
<div class="c d" style="left:505.50px;top:294.96px;width:53.00px;height:17.64px;">2.1</div>
<svg style="left:566.65px;top:300.33px" width="7.3" height="6.7"><polygon points="0,0 7.3,0 3.65,6.7" fill="#da1a20"/></svg>
<div class="c d" style="left:581.50px;top:294.96px;width:30.00px;height:17.64px;">95%</div>
<div class="c d" style="left:611.50px;top:294.96px;width:54.00px;height:17.64px;">2.4</div>
<svg style="left:672.40px;top:300.33px" width="7.3" height="6.7"><polygon points="0,0 7.3,0 3.65,6.7" fill="#da1a20"/></svg>
<div class="c d" style="left:686.00px;top:294.96px;width:31.50px;height:17.64px;">83%</div>
<div class="c d" style="left:445.50px;top:312.60px;width:60.00px;height:17.64px;">5.8</div>
<div class="c d" style="left:505.50px;top:312.60px;width:53.00px;height:17.64px;">6.0</div>
<svg style="left:566.65px;top:317.97px" width="7.3" height="6.7"><polygon points="0,0 7.3,0 3.65,6.7" fill="#da1a20"/></svg>
<div class="c d" style="left:581.50px;top:312.60px;width:30.00px;height:17.64px;">97%</div>
<div class="c d" style="left:611.50px;top:312.60px;width:54.00px;height:17.64px;">5.5</div>
<svg style="left:672.40px;top:317.97px" width="7.3" height="6.7"><polygon points="0,6.7 3.65,0 7.3,6.7" fill="#da1a20"/></svg>
<div class="c d" style="left:686.00px;top:312.60px;width:31.50px;height:17.64px;">105%</div>
<div class="c d" style="left:445.50px;top:330.24px;width:60.00px;height:17.64px;">0.8</div>
<div class="c d" style="left:505.50px;top:330.24px;width:53.00px;height:17.64px;">0.8</div>
<svg style="left:566.65px;top:335.61px" width="7.3" height="6.7"><polygon points="0,0 7.3,0 3.65,6.7" fill="#6ba352"/></svg>
<div class="c d" style="left:581.50px;top:330.24px;width:30.00px;height:17.64px;">100%</div>
<div class="c d" style="left:611.50px;top:330.24px;width:54.00px;height:17.64px;">1.0</div>
<svg style="left:672.40px;top:335.61px" width="7.3" height="6.7"><polygon points="0,0 7.3,0 3.65,6.7" fill="#6ba352"/></svg>
<div class="c d" style="left:686.00px;top:330.24px;width:31.50px;height:17.64px;">80%</div>
<div class="c d" style="left:445.50px;top:347.88px;width:60.00px;height:17.64px;">81.0</div>
<div class="c d" style="left:505.50px;top:347.88px;width:53.00px;height:17.64px;">83.8</div>
<svg style="left:566.65px;top:353.25px" width="7.3" height="6.7"><polygon points="0,0 7.3,0 3.65,6.7" fill="#da1a20"/></svg>
<div class="c d" style="left:581.50px;top:347.88px;width:30.00px;height:17.64px;">97%</div>
<div class="c d" style="left:611.50px;top:347.88px;width:54.00px;height:17.64px;">100.6</div>
<svg style="left:672.40px;top:353.25px" width="7.3" height="6.7"><polygon points="0,0 7.3,0 3.65,6.7" fill="#da1a20"/></svg>
<div class="c d" style="left:686.00px;top:347.88px;width:31.50px;height:17.64px;">81%</div>
<div class="c d" style="left:445.50px;top:365.52px;width:60.00px;height:17.64px;">7.1</div>
<div class="c d" style="left:505.50px;top:365.52px;width:53.00px;height:17.64px;">8.0</div>
<svg style="left:566.65px;top:370.89px" width="7.3" height="6.7"><polygon points="0,0 7.3,0 3.65,6.7" fill="#6ba352"/></svg>
<div class="c d" style="left:581.50px;top:365.52px;width:30.00px;height:17.64px;">89%</div>
<div class="c d" style="left:611.50px;top:365.52px;width:54.00px;height:17.64px;">8.0</div>
<svg style="left:672.40px;top:370.89px" width="7.3" height="6.7"><polygon points="0,0 7.3,0 3.65,6.7" fill="#6ba352"/></svg>
<div class="c d" style="left:686.00px;top:365.52px;width:31.50px;height:17.64px;">89%</div>
<div class="c d" style="left:445.50px;top:383.16px;width:60.00px;height:17.64px;">1.3</div>
<div class="c d" style="left:505.50px;top:383.16px;width:53.00px;height:17.64px;">1.0</div>
<svg style="left:566.65px;top:388.53px" width="7.3" height="6.7"><polygon points="0,6.7 3.65,0 7.3,6.7" fill="#da1a20"/></svg>
<div class="c d" style="left:581.50px;top:383.16px;width:30.00px;height:17.64px;">130%</div>
<div class="c d" style="left:611.50px;top:383.16px;width:54.00px;height:17.64px;">0.9</div>
<svg style="left:672.40px;top:388.53px" width="7.3" height="6.7"><polygon points="0,6.7 3.65,0 7.3,6.7" fill="#da1a20"/></svg>
<div class="c d" style="left:686.00px;top:383.16px;width:31.50px;height:17.64px;">144%</div>
<div class="c d" style="left:445.50px;top:400.80px;width:60.00px;height:17.64px;">103,742.7</div>
<div class="c d" style="left:505.50px;top:400.80px;width:53.00px;height:17.64px;">107,908.2</div>
<svg style="left:566.65px;top:406.17px" width="7.3" height="6.7"><polygon points="0,0 7.3,0 3.65,6.7" fill="#6ba352"/></svg>
<div class="c d" style="left:581.50px;top:400.80px;width:30.00px;height:17.64px;">96%</div>
<div class="c d" style="left:611.50px;top:400.80px;width:54.00px;height:17.64px;">107,908.2</div>
<svg style="left:672.40px;top:406.17px" width="7.3" height="6.7"><polygon points="0,0 7.3,0 3.65,6.7" fill="#6ba352"/></svg>
<div class="c d" style="left:686.00px;top:400.80px;width:31.50px;height:17.64px;">96%</div>
<div class="c d" style="left:445.50px;top:418.44px;width:60.00px;height:17.64px;">76.5</div>
<div class="c d" style="left:505.50px;top:418.44px;width:53.00px;height:17.64px;">78.9</div>
<svg style="left:566.65px;top:423.81px" width="7.3" height="6.7"><polygon points="0,0 7.3,0 3.65,6.7" fill="#da1a20"/></svg>
<div class="c d" style="left:581.50px;top:418.44px;width:30.00px;height:17.64px;">97%</div>
<div class="c d" style="left:611.50px;top:418.44px;width:54.00px;height:17.64px;">89.2</div>
<svg style="left:672.40px;top:423.81px" width="7.3" height="6.7"><polygon points="0,0 7.3,0 3.65,6.7" fill="#da1a20"/></svg>
<div class="c d" style="left:686.00px;top:418.44px;width:31.50px;height:17.64px;">86%</div>
<div class="" style="left:444.80px;top:224.40px;width:1.20px;height:365.60px;background:#74a85c;"></div>
<div class="" style="left:716.60px;top:224.40px;width:1.40px;height:365.60px;background:#74a85c;"></div>
<div class="" style="left:444.80px;top:198.60px;width:273.20px;height:1.20px;background:#5d9c3e;"></div>
<div class="" style="left:720.70px;top:198.70px;width:276.30px;height:391.30px;background:#fff;"></div>
<div class="" style="left:722.00px;top:241.54px;width:273.90px;height:1.00px;background:#f5ebf4;"></div>
<div class="" style="left:722.00px;top:259.18px;width:273.90px;height:1.00px;background:#f5ebf4;"></div>
<div class="" style="left:722.00px;top:276.82px;width:273.90px;height:1.00px;background:#f5ebf4;"></div>
<div class="" style="left:722.00px;top:294.46px;width:273.90px;height:1.00px;background:#f5ebf4;"></div>
<div class="" style="left:722.00px;top:312.10px;width:273.90px;height:1.00px;background:#f5ebf4;"></div>
<div class="" style="left:722.00px;top:329.74px;width:273.90px;height:1.00px;background:#f5ebf4;"></div>
<div class="" style="left:722.00px;top:347.38px;width:273.90px;height:1.00px;background:#f5ebf4;"></div>
<div class="" style="left:722.00px;top:365.02px;width:273.90px;height:1.00px;background:#f5ebf4;"></div>
<div class="" style="left:722.00px;top:382.66px;width:273.90px;height:1.00px;background:#f5ebf4;"></div>
<div class="" style="left:722.00px;top:400.30px;width:273.90px;height:1.00px;background:#f5ebf4;"></div>
<div class="" style="left:722.00px;top:417.94px;width:273.90px;height:1.00px;background:#f5ebf4;"></div>
<div class="" style="left:722.00px;top:435.58px;width:273.90px;height:1.00px;background:#f5ebf4;"></div>
<div class="" style="left:722.00px;top:451.85px;width:273.90px;height:1.00px;background:#f5ebf4;"></div>
<div class="" style="left:722.00px;top:468.10px;width:273.90px;height:1.00px;background:#f5ebf4;"></div>
<div class="" style="left:722.00px;top:484.35px;width:273.90px;height:1.00px;background:#f5ebf4;"></div>
<div class="" style="left:722.00px;top:500.60px;width:273.90px;height:1.00px;background:#f5ebf4;"></div>
<div class="" style="left:722.00px;top:516.85px;width:273.90px;height:1.00px;background:#f5ebf4;"></div>
<div class="" style="left:722.00px;top:533.10px;width:273.90px;height:1.00px;background:#f5ebf4;"></div>
<div class="" style="left:722.00px;top:549.35px;width:273.90px;height:1.00px;background:#f5ebf4;"></div>
<div class="" style="left:722.00px;top:565.60px;width:273.90px;height:1.00px;background:#f5ebf4;"></div>
<div class="" style="left:722.00px;top:581.85px;width:273.90px;height:1.00px;background:#f5ebf4;"></div>
<div class="" style="left:722.00px;top:598.10px;width:273.90px;height:1.00px;background:#f5ebf4;"></div>
<div class="" style="left:776.00px;top:224.40px;width:1.00px;height:365.60px;background:#f5ebf4;"></div>
<div class="" style="left:829.50px;top:224.40px;width:1.00px;height:365.60px;background:#f5ebf4;"></div>
<div class="" style="left:890.00px;top:224.40px;width:1.00px;height:365.60px;background:#f5ebf4;"></div>
<div class="" style="left:943.00px;top:224.40px;width:1.00px;height:365.60px;background:#f5ebf4;"></div>
<div class="" style="left:720.70px;top:198.70px;width:276.30px;height:25.70px;background:#a52d96;"></div>
<div class="c hd" style="left:721.50px;top:199.50px;width:55.00px;height:24.90px;padding-left:1px;padding-right:1px;">Actual</div>
<div class="" style="left:776.00px;top:200.00px;width:1.00px;height:24.40px;background:#cf8fc8;"></div>
<div class="c hd" style="left:776.50px;top:199.50px;width:53.50px;height:24.90px;padding-left:1px;padding-right:1px;">Target</div>
<div class="" style="left:829.50px;top:200.00px;width:1.00px;height:24.40px;background:#cf8fc8;"></div>
<div class="c hd" style="left:830.00px;top:199.50px;width:60.50px;height:24.90px;padding-left:1px;padding-right:1px;">Actual Vs Target</div>
<div class="" style="left:890.00px;top:200.00px;width:1.00px;height:24.40px;background:#cf8fc8;"></div>
<div class="c hd" style="left:890.50px;top:199.50px;width:53.00px;height:24.90px;padding-left:1px;padding-right:1px;">PY</div>
<div class="" style="left:943.00px;top:200.00px;width:1.00px;height:24.40px;background:#cf8fc8;"></div>
<div class="c hd" style="left:943.50px;top:199.50px;width:53.00px;height:24.90px;padding-left:1px;padding-right:1px;">PY Vs Actual</div>
<div class="c d" style="left:721.50px;top:224.40px;width:55.00px;height:17.64px;">1.7</div>
<div class="c d" style="left:776.50px;top:224.40px;width:53.50px;height:17.64px;">1.6</div>
<svg style="left:837.65px;top:229.77px" width="7.3" height="6.7"><polygon points="0,6.7 3.65,0 7.3,6.7" fill="#da1a20"/></svg>
<div class="c d" style="left:852.00px;top:224.40px;width:38.50px;height:17.64px;">106%</div>
<div class="c d" style="left:890.50px;top:224.40px;width:53.00px;height:17.64px;">1.2</div>
<svg style="left:951.65px;top:229.77px" width="7.3" height="6.7"><polygon points="0,6.7 3.65,0 7.3,6.7" fill="#6ba352"/></svg>
<div class="c d" style="left:966.50px;top:224.40px;width:30.00px;height:17.64px;">133%</div>
<div class="c d" style="left:721.50px;top:242.04px;width:55.00px;height:17.64px;">90.9</div>
<div class="c d" style="left:776.50px;top:242.04px;width:53.50px;height:17.64px;">93.4</div>
<svg style="left:837.65px;top:247.41px" width="7.3" height="6.7"><polygon points="0,6.7 3.65,0 7.3,6.7" fill="#da1a20"/></svg>
<div class="c d" style="left:852.00px;top:242.04px;width:38.50px;height:17.64px;">97%</div>
<div class="c d" style="left:890.50px;top:242.04px;width:53.00px;height:17.64px;">88.8</div>
<svg style="left:951.65px;top:247.41px" width="7.3" height="6.7"><polygon points="0,6.7 3.65,0 7.3,6.7" fill="#da1a20"/></svg>
<div class="c d" style="left:966.50px;top:242.04px;width:30.00px;height:17.64px;">102%</div>
<div class="c d" style="left:721.50px;top:259.68px;width:55.00px;height:17.64px;">12,768.0</div>
<div class="c d" style="left:776.50px;top:259.68px;width:53.50px;height:17.64px;">13,276.3</div>
<svg style="left:837.65px;top:265.05px" width="7.3" height="6.7"><polygon points="0,0 7.3,0 3.65,6.7" fill="#da1a20"/></svg>
<div class="c d" style="left:852.00px;top:259.68px;width:38.50px;height:17.64px;">96%</div>
<div class="c d" style="left:890.50px;top:259.68px;width:53.00px;height:17.64px;">12,745.2</div>
<svg style="left:951.65px;top:265.05px" width="7.3" height="6.7"><polygon points="0,6.7 3.65,0 7.3,6.7" fill="#da1a20"/></svg>
<div class="c d" style="left:966.50px;top:259.68px;width:30.00px;height:17.64px;">100%</div>
<div class="c d" style="left:721.50px;top:277.32px;width:55.00px;height:17.64px;">10.5</div>
<div class="c d" style="left:776.50px;top:277.32px;width:53.50px;height:17.64px;">12.5</div>
<svg style="left:837.65px;top:282.69px" width="7.3" height="6.7"><polygon points="0,0 7.3,0 3.65,6.7" fill="#6ba352"/></svg>
<div class="c d" style="left:852.00px;top:277.32px;width:38.50px;height:17.64px;">84%</div>
<div class="c d" style="left:890.50px;top:277.32px;width:53.00px;height:17.64px;">10.5</div>
<svg style="left:951.65px;top:282.69px" width="7.3" height="6.7"><polygon points="0,6.7 3.65,0 7.3,6.7" fill="#6ba352"/></svg>
<div class="c d" style="left:966.50px;top:277.32px;width:30.00px;height:17.64px;">100%</div>
<div class="c d" style="left:721.50px;top:294.96px;width:55.00px;height:17.64px;">2.0</div>
<div class="c d" style="left:776.50px;top:294.96px;width:53.50px;height:17.64px;">2.1</div>
<svg style="left:837.65px;top:300.33px" width="7.3" height="6.7"><polygon points="0,0 7.3,0 3.65,6.7" fill="#da1a20"/></svg>
<div class="c d" style="left:852.00px;top:294.96px;width:38.50px;height:17.64px;">95%</div>
<div class="c d" style="left:890.50px;top:294.96px;width:53.00px;height:17.64px;">2.3</div>
<svg style="left:951.65px;top:300.33px" width="7.3" height="6.7"><polygon points="0,0 7.3,0 3.65,6.7" fill="#da1a20"/></svg>
<div class="c d" style="left:966.50px;top:294.96px;width:30.00px;height:17.64px;">87%</div>
<div class="c d" style="left:721.50px;top:312.60px;width:55.00px;height:17.64px;">5.8</div>
<div class="c d" style="left:776.50px;top:312.60px;width:53.50px;height:17.64px;">5.9</div>
<svg style="left:837.65px;top:317.97px" width="7.3" height="6.7"><polygon points="0,0 7.3,0 3.65,6.7" fill="#da1a20"/></svg>
<div class="c d" style="left:852.00px;top:312.60px;width:38.50px;height:17.64px;">98%</div>
<div class="c d" style="left:890.50px;top:312.60px;width:53.00px;height:17.64px;">5.3</div>
<svg style="left:951.65px;top:317.97px" width="7.3" height="6.7"><polygon points="0,6.7 3.65,0 7.3,6.7" fill="#da1a20"/></svg>
<div class="c d" style="left:966.50px;top:312.60px;width:30.00px;height:17.64px;">109%</div>
<div class="c d" style="left:721.50px;top:330.24px;width:55.00px;height:17.64px;">0.8</div>
<div class="c d" style="left:776.50px;top:330.24px;width:53.50px;height:17.64px;">0.8</div>
<svg style="left:837.65px;top:335.61px" width="7.3" height="6.7"><polygon points="0,0 7.3,0 3.65,6.7" fill="#6ba352"/></svg>
<div class="c d" style="left:852.00px;top:330.24px;width:38.50px;height:17.64px;">100%</div>
<div class="c d" style="left:890.50px;top:330.24px;width:53.00px;height:17.64px;">1.0</div>
<svg style="left:951.65px;top:335.61px" width="7.3" height="6.7"><polygon points="0,0 7.3,0 3.65,6.7" fill="#6ba352"/></svg>
<div class="c d" style="left:966.50px;top:330.24px;width:30.00px;height:17.64px;">80%</div>
<div class="c d" style="left:721.50px;top:347.88px;width:55.00px;height:17.64px;">81.0</div>
<div class="c d" style="left:776.50px;top:347.88px;width:53.50px;height:17.64px;">84.0</div>
<svg style="left:837.65px;top:353.25px" width="7.3" height="6.7"><polygon points="0,0 7.3,0 3.65,6.7" fill="#da1a20"/></svg>
<div class="c d" style="left:852.00px;top:347.88px;width:38.50px;height:17.64px;">96%</div>
<div class="c d" style="left:890.50px;top:347.88px;width:53.00px;height:17.64px;">78.9</div>
<svg style="left:951.65px;top:353.25px" width="7.3" height="6.7"><polygon points="0,0 7.3,0 3.65,6.7" fill="#da1a20"/></svg>
<div class="c d" style="left:966.50px;top:347.88px;width:30.00px;height:17.64px;">103%</div>
<div class="c d" style="left:721.50px;top:365.52px;width:55.00px;height:17.64px;">7.1</div>
<div class="c d" style="left:776.50px;top:365.52px;width:53.50px;height:17.64px;">8.0</div>
<svg style="left:837.65px;top:370.89px" width="7.3" height="6.7"><polygon points="0,0 7.3,0 3.65,6.7" fill="#6ba352"/></svg>
<div class="c d" style="left:852.00px;top:365.52px;width:38.50px;height:17.64px;">89%</div>
<div class="c d" style="left:890.50px;top:365.52px;width:53.00px;height:17.64px;">7.3</div>
<svg style="left:951.65px;top:370.89px" width="7.3" height="6.7"><polygon points="0,0 7.3,0 3.65,6.7" fill="#6ba352"/></svg>
<div class="c d" style="left:966.50px;top:365.52px;width:30.00px;height:17.64px;">97%</div>
<div class="c d" style="left:721.50px;top:383.16px;width:55.00px;height:17.64px;">1.3</div>
<div class="c d" style="left:776.50px;top:383.16px;width:53.50px;height:17.64px;">1.0</div>
<svg style="left:837.65px;top:388.53px" width="7.3" height="6.7"><polygon points="0,6.7 3.65,0 7.3,6.7" fill="#da1a20"/></svg>
<div class="c d" style="left:852.00px;top:383.16px;width:38.50px;height:17.64px;">130%</div>
<div class="c d" style="left:890.50px;top:383.16px;width:53.00px;height:17.64px;">1.0</div>
<svg style="left:951.65px;top:388.53px" width="7.3" height="6.7"><polygon points="0,6.7 3.65,0 7.3,6.7" fill="#da1a20"/></svg>
<div class="c d" style="left:966.50px;top:383.16px;width:30.00px;height:17.64px;">130%</div>
<div class="c d" style="left:721.50px;top:400.80px;width:55.00px;height:17.64px;">103,742.7</div>
<div class="c d" style="left:776.50px;top:400.80px;width:53.50px;height:17.64px;">108,543.2</div>
<svg style="left:837.65px;top:406.17px" width="7.3" height="6.7"><polygon points="0,0 7.3,0 3.65,6.7" fill="#6ba352"/></svg>
<div class="c d" style="left:852.00px;top:400.80px;width:38.50px;height:17.64px;">96%</div>
<div class="c d" style="left:890.50px;top:400.80px;width:53.00px;height:17.64px;">125,910.1</div>
<svg style="left:951.65px;top:406.17px" width="7.3" height="6.7"><polygon points="0,0 7.3,0 3.65,6.7" fill="#6ba352"/></svg>
<div class="c d" style="left:966.50px;top:400.80px;width:30.00px;height:17.64px;">82%</div>
<div class="c d" style="left:721.50px;top:418.44px;width:55.00px;height:17.64px;">76.5</div>
<div class="c d" style="left:776.50px;top:418.44px;width:53.50px;height:17.64px;">78.0</div>
<svg style="left:837.65px;top:423.81px" width="7.3" height="6.7"><polygon points="0,0 7.3,0 3.65,6.7" fill="#da1a20"/></svg>
<div class="c d" style="left:852.00px;top:418.44px;width:38.50px;height:17.64px;">98%</div>
<div class="c d" style="left:890.50px;top:418.44px;width:53.00px;height:17.64px;">77.2</div>
<svg style="left:951.65px;top:423.81px" width="7.3" height="6.7"><polygon points="0,0 7.3,0 3.65,6.7" fill="#da1a20"/></svg>
<div class="c d" style="left:966.50px;top:418.44px;width:30.00px;height:17.64px;">99%</div>
<div class="" style="left:720.70px;top:224.40px;width:1.30px;height:365.60px;background:#4f2049;"></div>
<div class="" style="left:995.90px;top:224.40px;width:1.10px;height:365.60px;background:#5c2a54;"></div>
<div class="" style="left:720.70px;top:198.70px;width:276.30px;height:1.20px;background:#6d1f64;"></div>
</body></html>
